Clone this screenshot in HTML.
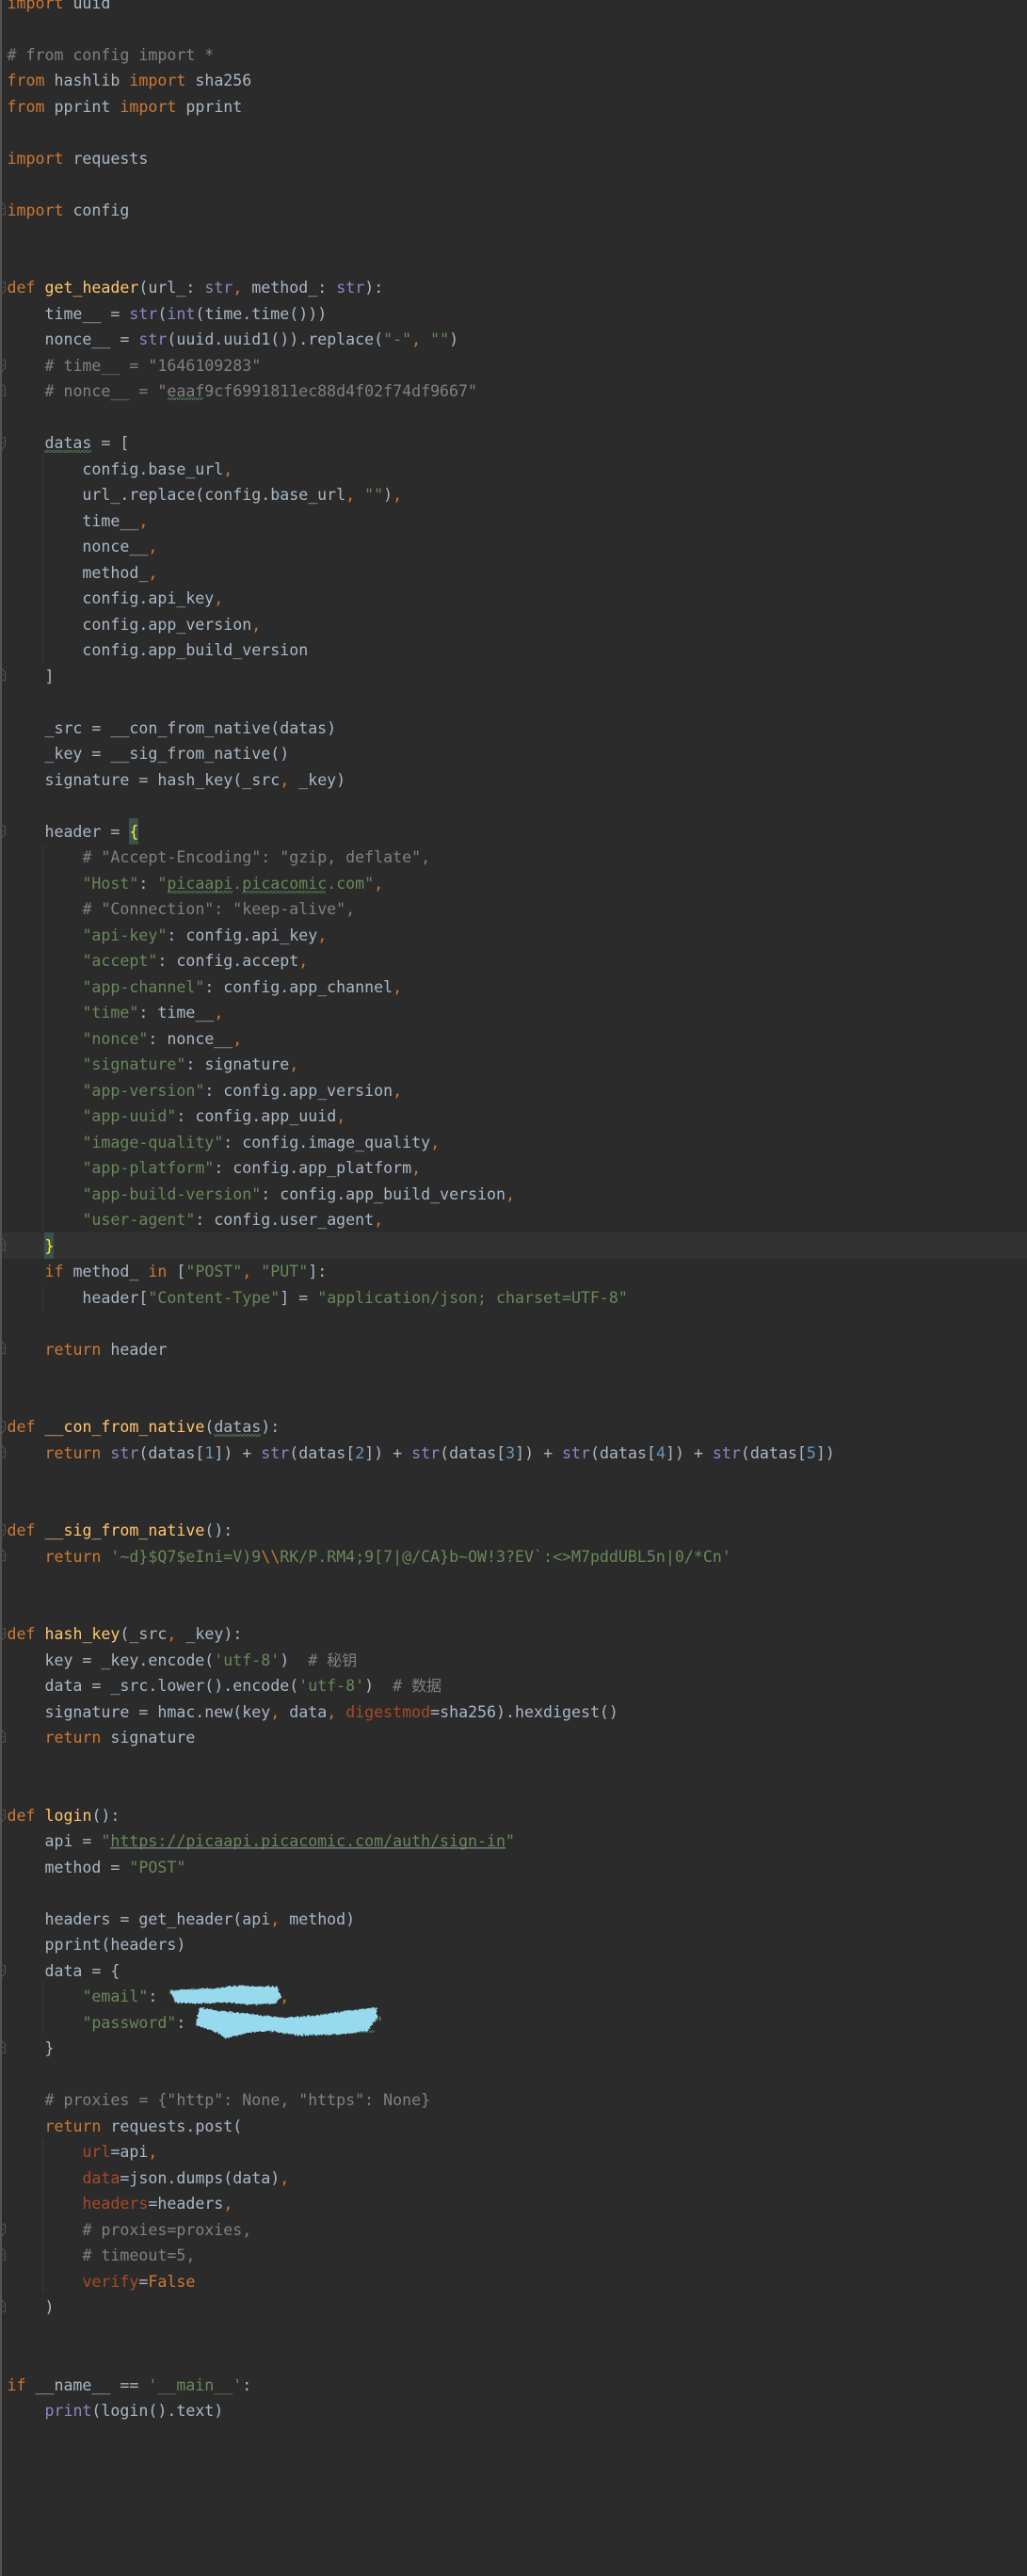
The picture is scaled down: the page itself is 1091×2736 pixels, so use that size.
<!DOCTYPE html>
<html>
<head>
<meta charset="utf-8">
<style>
html,body{margin:0;padding:0;background:#2b2b2b}
body{position:relative;width:1091px;height:2736px;overflow:hidden}
.a{position:absolute}
pre{position:absolute;left:7.5px;top:-10.5px;margin:0;font:16.6px/27.5px "DejaVu Sans Mono","Liberation Mono","Noto Sans CJK SC",monospace;color:#a9b7c6;filter:blur(.35px)}
.k,.o{color:#cc7832}.s{color:#6a8759}.c{color:#808080}.b{color:#8888c6}.f{color:#ffc66d}.p{color:#aa4926}.n{color:#6897bb}.y{color:#ffef28}
.z{font-size:16px}
</style>
</head>
<body>
<div class="a" style="left:1px;top:1309px;width:1090px;height:28px;background:#323232"></div>
<div class="a" style="left:137px;top:869px;width:10px;height:28px;background:#3b514d"></div>
<div class="a" style="left:47px;top:1309px;width:10px;height:28px;background:#3b514d"></div>
<div class="a" style="left:0;top:0;width:1.5px;height:2736px;background:#555"></div>
<div class="a" style="left:45px;top:483px;width:1px;height:220px;background:#393939"></div>
<div class="a" style="left:45px;top:897px;width:1px;height:412px;background:#393939"></div>
<div class="a" style="left:45px;top:1365px;width:1px;height:27px;background:#393939"></div>
<div class="a" style="left:45px;top:2106px;width:1px;height:55px;background:#393939"></div>
<div class="a" style="left:45px;top:2272px;width:1px;height:163px;background:#393939"></div>
<pre><span class="k">import</span> uuid

<span class="c"># from config import *</span>
<span class="k">from</span> hashlib <span class="k">import</span> sha256
<span class="k">from</span> pprint <span class="k">import</span> pprint

<span class="k">import</span> requests

<span class="k">import</span> config


<span class="k">def</span> <span class="f">get_header</span>(url_: <span class="b">str</span><span class="o">,</span> method_: <span class="b">str</span>):
    time__ = <span class="b">str</span>(<span class="b">int</span>(time.time()))
    nonce__ = <span class="b">str</span>(uuid.uuid1()).replace(<span class="s">"-"</span><span class="o">,</span> <span class="s">""</span>)
    <span class="c"># time__ = "1646109283"</span>
    <span class="c"># nonce__ = "eaaf9cf6991811ec88d4f02f74df9667"</span>

    datas = [
        config.base_url<span class="o">,</span>
        url_.replace(config.base_url<span class="o">,</span> <span class="s">""</span>)<span class="o">,</span>
        time__<span class="o">,</span>
        nonce__<span class="o">,</span>
        method_<span class="o">,</span>
        config.api_key<span class="o">,</span>
        config.app_version<span class="o">,</span>
        config.app_build_version
    ]

    _src = __con_from_native(datas)
    _key = __sig_from_native()
    signature = hash_key(_src<span class="o">,</span> _key)

    header = <span class="y">{</span>
        <span class="c"># "Accept-Encoding": "gzip, deflate",</span>
        <span class="s">"Host"</span>: <span class="s">"picaapi.picacomic.com"</span><span class="o">,</span>
        <span class="c"># "Connection": "keep-alive",</span>
        <span class="s">"api-key"</span>: config.api_key<span class="o">,</span>
        <span class="s">"accept"</span>: config.accept<span class="o">,</span>
        <span class="s">"app-channel"</span>: config.app_channel<span class="o">,</span>
        <span class="s">"time"</span>: time__<span class="o">,</span>
        <span class="s">"nonce"</span>: nonce__<span class="o">,</span>
        <span class="s">"signature"</span>: signature<span class="o">,</span>
        <span class="s">"app-version"</span>: config.app_version<span class="o">,</span>
        <span class="s">"app-uuid"</span>: config.app_uuid<span class="o">,</span>
        <span class="s">"image-quality"</span>: config.image_quality<span class="o">,</span>
        <span class="s">"app-platform"</span>: config.app_platform<span class="o">,</span>
        <span class="s">"app-build-version"</span>: config.app_build_version<span class="o">,</span>
        <span class="s">"user-agent"</span>: config.user_agent<span class="o">,</span>
    <span class="y">}</span>
    <span class="k">if</span> method_ <span class="k">in</span> [<span class="s">"POST"</span><span class="o">,</span> <span class="s">"PUT"</span>]:
        header[<span class="s">"Content-Type"</span>] = <span class="s">"application/json; charset=UTF-8"</span>

    <span class="k">return</span> header


<span class="k">def</span> <span class="f">__con_from_native</span>(datas):
    <span class="k">return</span> <span class="b">str</span>(datas[<span class="n">1</span>]) + <span class="b">str</span>(datas[<span class="n">2</span>]) + <span class="b">str</span>(datas[<span class="n">3</span>]) + <span class="b">str</span>(datas[<span class="n">4</span>]) + <span class="b">str</span>(datas[<span class="n">5</span>])


<span class="k">def</span> <span class="f">__sig_from_native</span>():
    <span class="k">return</span> <span class="s">'~d}$Q7$eIni=V)9<span class="o">\\</span>RK/P.RM4;9[7|@/CA}b~OW!3?EV`:&lt;&gt;M7pddUBL5n|0/*Cn'</span>


<span class="k">def</span> <span class="f">hash_key</span>(_src<span class="o">,</span> _key):
    key = _key.encode(<span class="s">'utf-8'</span>)  <span class="c"># <span class="z">秘钥</span></span>
    data = _src.lower().encode(<span class="s">'utf-8'</span>)  <span class="c"># <span class="z">数据</span></span>
    signature = hmac.new(key<span class="o">,</span> data<span class="o">,</span> <span class="p">digestmod</span>=sha256).hexdigest()
    <span class="k">return</span> signature


<span class="k">def</span> <span class="f">login</span>():
    api = <span class="s">"https://picaapi.picacomic.com/auth/sign-in"</span>
    method = <span class="s">"POST"</span>

    headers = get_header(api<span class="o">,</span> method)
    pprint(headers)
    data = {
        <span class="s">"email"</span>: <span class="s">"          "</span><span class="o">,</span>
        <span class="s">"password"</span>: <span class="s">"                  "</span>
    }

    <span class="c"># proxies = {"http": None, "https": None}</span>
    <span class="k">return</span> requests.post(
        <span class="p">url</span>=api<span class="o">,</span>
        <span class="p">data</span>=json.dumps(data)<span class="o">,</span>
        <span class="p">headers</span>=headers<span class="o">,</span>
        <span class="c"># proxies=proxies,</span>
        <span class="c"># timeout=5,</span>
        <span class="p">verify</span>=<span class="k">False</span>
    )


<span class="k">if</span> __name__ == <span class="s">'__main__'</span>:
    <span class="b">print</span>(login().text)
</pre>
<svg class="a" style="left:0;top:0" width="1091" height="2736" viewBox="0 0 1091 2736" xmlns="http://www.w3.org/2000/svg">
<defs>
<pattern id="w" width="4" height="3" patternUnits="userSpaceOnUse"><path d="M0 2.5L1 .5L2 .5L3 2.5L4 2.5" fill="none" stroke="#5f8f63" stroke-width=".8"/></pattern>
<g id="st" fill="none" stroke="#555" stroke-width="1"><path d="M0 -5.5H5.5V3L0 9M0 0H4"/></g>
<g id="en" fill="none" stroke="#555" stroke-width="1"><path d="M0 -10L5.5 -3.5V5H0M0 -1H4"/></g>
<filter id="rough" x="-5%" y="-30%" width="110%" height="160%"><feTurbulence type="fractalNoise" baseFrequency=".45" numOctaves="2" seed="4"/><feDisplacementMap in="SourceGraphic" scale="4" xChannelSelector="R" yChannelSelector="G"/></filter>
</defs>
<rect x="178" y="422" width="38" height="3" fill="url(#w)"/>
<rect x="47" y="478" width="50" height="3" fill="url(#w)"/>
<rect x="178" y="946" width="69" height="3" fill="url(#w)"/>
<rect x="257" y="946" width="89" height="3" fill="url(#w)"/>
<rect x="227" y="1523" width="50" height="3" fill="url(#w)"/>
<rect x="364" y="2156" width="34" height="3" fill="url(#w)"/>
<rect x="117" y="1962" width="420" height="1.5" fill="#737d85"/>
<use href="#en" y="222.75"/>
<use href="#st" y="305.25"/>
<use href="#st" y="387.75"/>
<use href="#en" y="415.25"/>
<use href="#st" y="470.25"/>
<use href="#en" y="717.75"/>
<use href="#st" y="882.75"/>
<use href="#en" y="1322.75"/>
<use href="#en" y="1432.75"/>
<use href="#st" y="1515.25"/>
<use href="#en" y="1542.75"/>
<use href="#st" y="1625.25"/>
<use href="#en" y="1652.75"/>
<use href="#st" y="1735.25"/>
<use href="#en" y="1845.25"/>
<use href="#st" y="1927.75"/>
<use href="#st" y="2092.75"/>
<use href="#en" y="2175.25"/>
<use href="#st" y="2367.75"/>
<use href="#en" y="2395.25"/>
<use href="#en" y="2450.25"/>
<g filter="url(#rough)" fill="#97d9ed">
<path d="M181 2114L200 2113L227 2112L253 2109L294 2110L299 2120L293 2128L267 2129L240 2127L213 2128L186 2127Z"/>
<path d="M212 2132L233 2136L267 2139L300 2143L333 2141L367 2136L400 2132L401 2142L391 2157L363 2161L317 2162L287 2157L263 2159L240 2165L231 2159L217 2154L208 2151Z"/>
</g>
</svg>
</body>
</html>
